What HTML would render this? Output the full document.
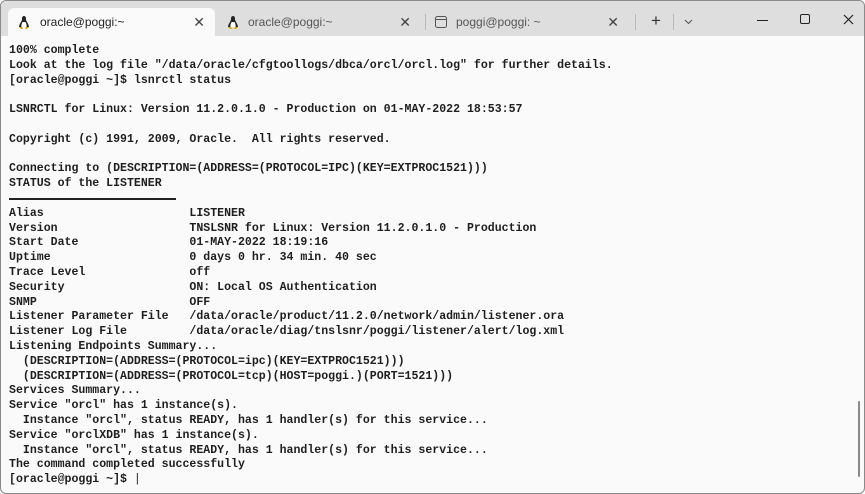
<!DOCTYPE html>
<html><head><style>
html,body{margin:0;padding:0;width:865px;height:494px;overflow:hidden;background:#fafafa;font-family:"Liberation Sans",sans-serif}
.win{position:absolute;left:0;top:0;width:863px;height:492px;border:1px solid #8a8a8a;border-radius:6px;overflow:hidden;background:#fafafa}
.bar{position:absolute;left:0;top:0;width:100%;height:35px;background:#dedede}
.tab{position:absolute;top:7px;height:28px;font-size:12px;color:#222;line-height:28px}
.t1{left:7px;width:207px;background:#fafafa;border-radius:6px 6px 0 0}
.t2{left:220px;width:200px;color:#555}
.t3{left:428px;width:200px;color:#555}
.lbl{position:absolute;left:32px;top:0}
.x{position:absolute;right:10px;top:0;font-size:14px;color:#444}
.sep{position:absolute;top:13px;width:1px;height:16px;background:#bbb}
pre{position:absolute;left:8px;top:43px;margin:0;font-family:"Liberation Mono",monospace;font-weight:bold;font-size:11.57px;line-height:14.8px;color:#1e1e1e;letter-spacing:0}
.rule{position:absolute;left:8px;top:197px;width:167px;height:1.5px;background:#222}
.sb{position:absolute;left:857px;top:400px;width:2px;height:76px;background:#8a8a8a;border-radius:1px}
</style></head><body><div class="win">
<div class="bar">
<div class="tab t1"><svg style="position:absolute;left:10px;top:7px" width="12" height="14" viewBox="0 0 12 14"><path d="M6 1C4 1 4 3 4 5 3 7 1 10 1 12h10C11 10 9 7 8 5 8 3 8 1 6 1Z" fill="#222"/><path d="M4.5 7C3.5 9 3 11 3.5 12h5C9 11 8.5 9 7.5 7Z" fill="#fff"/><path d="M1 12l2 2h2l-1-2ZM11 12l-2 2H7l1-2Z" fill="#e8a000"/></svg><span class="lbl">oracle@poggi:~</span><span class="x">✕</span></div>
<div class="tab t2"><svg style="position:absolute;left:6px;top:7px" width="12" height="14" viewBox="0 0 12 14"><path d="M6 1C4 1 4 3 4 5 3 7 1 10 1 12h10C11 10 9 7 8 5 8 3 8 1 6 1Z" fill="#222"/><path d="M4.5 7C3.5 9 3 11 3.5 12h5C9 11 8.5 9 7.5 7Z" fill="#fff"/><path d="M1 12l2 2h2l-1-2ZM11 12l-2 2H7l1-2Z" fill="#e8a000"/></svg><span class="lbl" style="left:27px">oracle@poggi:~</span><span class="x">✕</span></div>
<div class="sep" style="left:424px"></div>
<div class="tab t3"><svg style="position:absolute;left:6px;top:8px" width="12" height="12" viewBox="0 0 12 12"><rect x="0.5" y="0.5" width="11" height="11" rx="2" fill="none" stroke="#555"/><path d="M0.5 3.5h11" stroke="#555"/></svg><span class="lbl" style="left:27px">poggi@poggi: ~</span><span class="x">✕</span></div>
<div class="sep" style="left:634px"></div>
<div style="position:absolute;left:650px;top:10px;font-size:17px;color:#333">+</div>
<div class="sep" style="left:672px"></div>
<svg style="position:absolute;left:683px;top:18px" width="9" height="6"><path d="M1 1l3.5 3.5L8 1" fill="none" stroke="#555"/></svg>
<div style="position:absolute;left:756px;top:19px;width:11px;height:1px;background:#222"></div>
<div style="position:absolute;left:799px;top:13px;width:8px;height:8px;border:1.2px solid #222;border-radius:2px"></div>
<svg style="position:absolute;left:842px;top:13px" width="11" height="11"><path d="M1 1l9 9M10 1l-9 9" stroke="#222" stroke-width="1.2"/></svg>
</div>
<pre>100% complete
Look at the log file "/data/oracle/cfgtoollogs/dbca/orcl/orcl.log" for further details.
[oracle@poggi ~]$ lsnrctl status

LSNRCTL for Linux: Version 11.2.0.1.0 - Production on 01-MAY-2022 18:53:57

Copyright (c) 1991, 2009, Oracle.  All rights reserved.

Connecting to (DESCRIPTION=(ADDRESS=(PROTOCOL=IPC)(KEY=EXTPROC1521)))
STATUS of the LISTENER

Alias                     LISTENER
Version                   TNSLSNR for Linux: Version 11.2.0.1.0 - Production
Start Date                01-MAY-2022 18:19:16
Uptime                    0 days 0 hr. 34 min. 40 sec
Trace Level               off
Security                  ON: Local OS Authentication
SNMP                      OFF
Listener Parameter File   /data/oracle/product/11.2.0/network/admin/listener.ora
Listener Log File         /data/oracle/diag/tnslsnr/poggi/listener/alert/log.xml
Listening Endpoints Summary...
  (DESCRIPTION=(ADDRESS=(PROTOCOL=ipc)(KEY=EXTPROC1521)))
  (DESCRIPTION=(ADDRESS=(PROTOCOL=tcp)(HOST=poggi.)(PORT=1521)))
Services Summary...
Service "orcl" has 1 instance(s).
  Instance "orcl", status READY, has 1 handler(s) for this service...
Service "orclXDB" has 1 instance(s).
  Instance "orcl", status READY, has 1 handler(s) for this service...
The command completed successfully
[oracle@poggi ~]$ <span style="font-weight:normal">|</span></pre>
<div class="rule"></div>
<div class="sb"></div>
</div></body></html>
